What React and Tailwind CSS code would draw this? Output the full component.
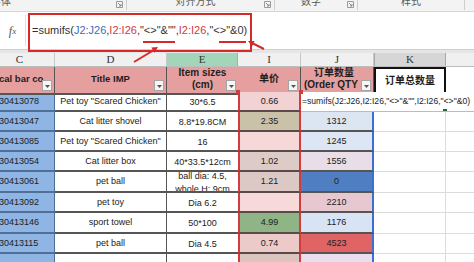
const cols = "grid grid-cols-[55px_112px_71px_63px_73px_72px_28px]";

const rows = [
  { h: "h-[20px]", c: "30413078", d: 'Pet toy "Scared Chicken"', e: "30*6.5", i: "0.66", ib: "bg-[#f2d2d2]" },
  { h: "h-[20px]", c: "30413047", d: "Cat litter shovel", e: "8.8*19.8CM", i: "2.35", ib: "bg-[#c9c1a8]", j: "1312", jb: "bg-[#dce5f2]" },
  { h: "h-[20px]", c: "30413085", d: 'Pet toy "Scared Chicken"', e: "16", i: "", ib: "bg-[#f7d8d8]", j: "1245", jb: "bg-[#dde6f4]" },
  { h: "h-[20px]", c: "30413054", d: "Cat litter box", e: "40*33.5*12cm", i: "1.02", ib: "bg-[#ddcbc7]", j: "1556", jb: "bg-[#e9dee8]" },
  { h: "h-[21px]", c: "30413061", d: "pet ball", e: ["ball dia: 4.5,", "whole H: 9cm"], i: "1.21", ib: "bg-[#dcc9c5]", j: "0", jb: "bg-[#4f7ec2]" },
  { h: "h-[20px]", c: "30413092", d: "pet toy", e: "Dia 6.2", i: "", ib: "bg-[#f7d9d9]", j: "2210", jb: "bg-[#e7c8d1]" },
  { h: "h-[21px]", c: "30413146", d: "sport towel", e: "50*100", i: "4.99", ib: "bg-[#8fb486]", j: "1176", jb: "bg-[#d8e3f4]" },
  { h: "h-[20px]", c: "30413115", d: "pet ball", e: "Dia 4.5", i: "0.74", ib: "bg-[#edcaca]", j: "4523", jb: "bg-[#e06464]" },
  { h: "h-[20px]", c: "", d: "", e: "", i: "", ib: "bg-[#dcc5be]", j: "", jb: "bg-[#e8def0]" },
];

const Launcher = () => (
  <svg width="7" height="7" viewBox="0 0 7 7" className="mt-[1px]">
    <path d="M0.5 0.5h6v6h-6z" fill="none" stroke="#9a9a9a" strokeWidth="1" />
    <path d="M2 2l3 3M5 3v2H3" fill="none" stroke="#777" strokeWidth="0.8" />
  </svg>
);

const Sep = () => <div className="w-px h-[10px] bg-[#cfcfcf]" />;

function Ribbon() {
  return (
    <div className="h-[12px] bg-[#f3f3f3] border-b border-[#d6d6d6] flex items-start overflow-hidden text-[10px] leading-[10px] text-[#555]">
      <div className="w-[116px] -mt-[3px]">
        <span className="-ml-[9px] inline-block">字体</span>
      </div>
      <Launcher />
      <div className="w-[3px]" />
      <Sep />
      <div className="w-[137px] flex justify-center -mt-[3px]">对齐方式</div>
      <Launcher />
      <div className="w-[3px]" />
      <Sep />
      <div className="w-[72px] flex justify-center -mt-[3px]">数字</div>
      <Launcher />
      <div className="w-[3px]" />
      <Sep />
      <div className="w-[106px] flex justify-center -mt-[3px]">样式</div>
      <Sep />
    </div>
  );
}

function FormulaBar() {
  return (
    <div className="h-[38px] flex bg-white border-b border-[#d0d0d0]">
      <div className="w-[26px] flex items-center justify-center border-r border-[#e0e0e0] my-[3px] font-['Liberation_Serif',serif] italic text-[#555] text-[12px]">
        f<span className="text-[9px] mt-[3px]">x</span>
      </div>
      <div className="flex-1 flex items-center pl-[6px] text-[11px] text-[#333] whitespace-nowrap">
        =sumifs(<span className="text-[#3b6cc0]">J2:J26</span>,<span className="text-[#d23a3a]">I2:I26</span>,"&lt;&gt;"&amp;"",<span className="text-[#d23a3a]">I2:I26</span>,"&lt;&gt;"&amp;0)
      </div>
    </div>
  );
}

function ColumnHeaders() {
  return (
    <div className={`${cols} h-[14px] bg-[#f0f0f0] border-b border-[#bdbdbd] font-['Liberation_Serif',serif] text-[11px] leading-[13px] text-[#333]`}>
      <div className="flex justify-center pr-[15px] border-r border-[#c8c8c8]">C</div>
      <div className="flex justify-center border-r border-[#c8c8c8]">D</div>
      <div className="flex justify-center bg-[#a3d6b8] border-r border-[#8bbf9f]">E</div>
      <div className="flex justify-center border-r border-[#c8c8c8]">I</div>
      <div className="flex justify-center border-r border-[#c8c8c8]">J</div>
      <div className="flex justify-center bg-[#d6d6d6] border-x border-[#a8a8a8]">K</div>
      <div />
    </div>
  );
}

const Filter = () => (
  <div className="absolute right-[2px] bottom-[2px] w-[10px] h-[11px] bg-[#f6f6f6] border border-[#a5a5a5] flex items-end justify-center pb-[2px]">
    <svg width="5" height="3" viewBox="0 0 5 3">
      <path d="M0 0h5L2.5 3z" fill="#555" />
    </svg>
  </div>
);

function HeaderRow() {
  const head = "relative flex items-center bg-[#e59f9f] border-r border-b-2 border-[#555] pb-[2px]";
  return (
    <div className={`${cols} h-[25px] text-[9.5px] font-bold leading-[12px] text-[#1e1e1e]`}>
      <div className={`${head} justify-start overflow-hidden whitespace-nowrap`}>
        <span className="-ml-[1px]">cal bar co</span>
        <Filter />
      </div>
      <div className={`${head} justify-center`}>
        Title IMP
        <Filter />
      </div>
      <div className={`${head} flex-col justify-center text-[10px] border-r-0`}>
        <span>Item sizes</span>
        <span>(cm)</span>
        <Filter />
      </div>
      <div className={`${head} justify-center text-[10px]`}>
        单价
        <Filter />
      </div>
      <div className={`${head} flex-col justify-center items-start pl-[3px] text-[10px] overflow-hidden whitespace-nowrap`}>
        <span className="pl-[10px]">订单数量</span>
        <span>(Order QTY</span>
        <Filter />
      </div>
      <div className="flex items-center justify-center bg-white border-2 border-[#111] text-[10px]">订单总数量</div>
      <div className="border-b border-[#dcdcdc]" />
    </div>
  );
}

function DataRow({ r, first }) {
  return (
    <div className={`${cols} ${r.h} text-[9px] leading-[11px] text-[#222]`}>
      <div className="flex items-center bg-[#8eb5e3] border-r border-b-2 border-[#4f6f96] overflow-hidden whitespace-nowrap">
        <span className="-ml-[1px]">{r.c}</span>
      </div>
      <div className="flex items-center justify-center bg-white border-r border-b-2 border-[#555]">{r.d}</div>
      <div className="flex flex-col items-center justify-center bg-white border-b-2 border-[#555] overflow-hidden leading-[13px] pt-[2px]">
        {Array.isArray(r.e) ? r.e.map((t) => <span key={t}>{t}</span>) : r.e}
      </div>
      <div className={`relative flex items-center justify-center ${r.ib} border-x-2 border-x-[#d23c3c] border-b-2 border-b-[#5a4a4a]`}>
        {r.i}
      </div>
      {first ? (
        <div className="col-span-3 relative flex items-center bg-white border-b border-[#bcbcbc] pl-[1px] whitespace-nowrap overflow-hidden text-[8.6px]">
          =sumifs(J2:J26,I2:I26,"&lt;&gt;"&amp;"",I2:I26,"&lt;&gt;"&amp;0)
          <div className="absolute right-[27px] -bottom-[2px] w-[4px] h-[4px] bg-[#1f6b3a]" />
        </div>
      ) : (
        <>
          <div className={`flex items-center justify-center ${r.jb} border-r-2 border-r-[#3b6fd4] border-b-2 border-b-[#555]`}>
            {r.j}
          </div>
          <div className="bg-white border-r border-b border-[#dcdcdc]" />
          <div className="bg-white border-b border-[#dcdcdc]" />
        </>
      )}
    </div>
  );
}

function Annotations() {
  return (
    <>
      <div className="absolute left-[28px] top-[13px] w-[224px] h-[39px] border-2 border-[#d42a2a]" />
      <svg className="absolute inset-0 pointer-events-none" width="474" height="262">
        <line x1="143" y1="42" x2="175" y2="42" stroke="#d42a2a" strokeWidth="2" />
        <line x1="219" y1="42" x2="246" y2="42" stroke="#d42a2a" strokeWidth="2" />
        <line x1="134" y1="62" x2="154" y2="50" stroke="#d42a2a" strokeWidth="2" />
        <polygon points="158,47 154.5,52.7 151.3,47.5" fill="#d42a2a" />
        <line x1="264" y1="49" x2="253" y2="43.5" stroke="#d42a2a" strokeWidth="2" />
        <polygon points="248,41 254.7,41 252,46.4" fill="#d42a2a" />
        <rect x="236" y="90" width="4" height="4" fill="#d23c3c" />
        <rect x="299" y="90" width="4" height="4" fill="#d23c3c" />
      </svg>
    </>
  );
}

export default function App() {
  return (
    <div className="relative w-[474px] h-[262px] overflow-hidden bg-white font-['Liberation_Sans','Noto_Sans_CJK_SC',sans-serif]">
      <Ribbon />
      <FormulaBar />
      <div className="h-[3px] bg-[#e6e6e6]" />
      <ColumnHeaders />
      <HeaderRow />
      {rows.map((r, idx) => (
        <DataRow key={idx} r={r} first={idx === 0} />
      ))}
      <Annotations />
    </div>
  );
}
